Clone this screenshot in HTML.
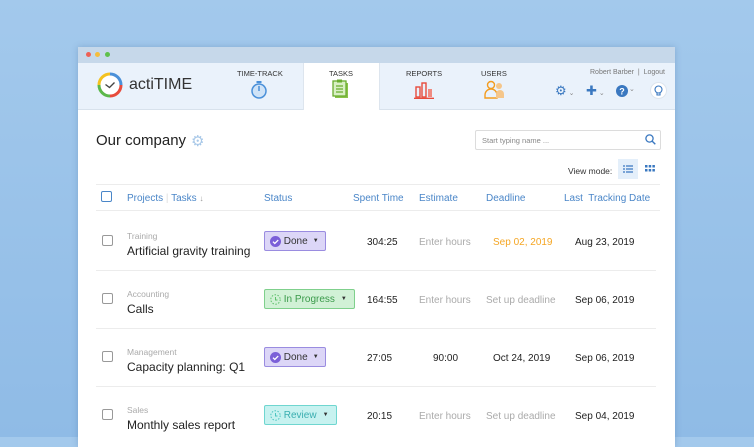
<!DOCTYPE html>
<html><head><meta charset="utf-8"><style>
*{margin:0;padding:0;box-sizing:border-box}
body{width:754px;height:437px;overflow:hidden;font-family:"Liberation Sans",sans-serif;background:linear-gradient(180deg,#a3c9ec 0%,#8fbbe6 100%);position:relative}
.a{position:absolute;white-space:nowrap}
.win{position:absolute;left:78px;top:47px;width:597px;height:400px;background:#fff;box-shadow:0 0 6px rgba(40,80,130,.25)}
.tb{position:absolute;left:0;top:0;width:597px;height:16px;background:#c6d8ea}
.dot{position:absolute;top:5px;width:5px;height:5px;border-radius:50%}
.hd{position:absolute;left:0;top:16px;width:597px;height:47px;background:#eaf2fb;border-bottom:1px solid #d8e2ec}
.nav{font-size:7.5px;color:#333}
.th{font-size:10px;color:#4a86c8}
.cb{position:absolute;width:11px;height:11px;border:1.3px solid #999;border-radius:2px;background:#fff}
.proj{font-size:8.5px;color:#aaa}
.task{font-size:12px;color:#222}
.num{font-size:10px;color:#222}
.gray{font-size:10px;color:#aaa}
.sep{position:absolute;left:96px;width:560px;height:1px;background:#ececec}
.badge{position:absolute;height:20px;border-radius:2px;font-size:10px;display:flex;align-items:center;padding-left:5px}
</style></head><body>
<div class="win">
<div class="tb"><div class="dot" style="left:8px;background:#ee6055"></div><div class="dot" style="left:17px;background:#f5bd3c"></div><div class="dot" style="left:27px;background:#5fc04a"></div></div>
<div class="hd">
<svg class="a" style="left:19px;top:9px" width="26" height="26" viewBox="0 0 26 26"><circle cx="13" cy="13" r="11" fill="#fff" stroke="#eee" stroke-width="1"/><path d="M13 2A11 11 0 0 1 24 13" stroke="#4a90d9" stroke-width="3" fill="none"/><path d="M24 13A11 11 0 0 1 13 24" stroke="#e84b3c" stroke-width="3" fill="none"/><path d="M13 24A11 11 0 0 1 2 13" stroke="#5bb84a" stroke-width="3" fill="none"/><path d="M2 13A11 11 0 0 1 13 2" stroke="#f4c21f" stroke-width="3" fill="none"/><path d="M8.5 12.5l4 3 5-5" stroke="#444" stroke-width="1.4" fill="none"/></svg>
<div class="a" style="left:51px;top:13px;font-size:16px;color:#333">actiTIME</div>
<div class="a nav" style="left:159px;top:6px">TIME-TRACK</div>
<svg class="a" style="left:172px;top:17px" width="18" height="20" viewBox="0 0 18 20"><circle cx="9" cy="11" r="7" fill="#cfe3f7" stroke="#4a90d9" stroke-width="1.5"/><rect x="6.5" y="1" width="5" height="2" fill="#4a90d9"/><path d="M9 6v5" stroke="#4a90d9" stroke-width="1.5"/></svg>
<div class="a" style="left:225px;top:0;width:77px;height:47px;background:#fff;border-left:1px solid #dde5ee;border-right:1px solid #dde5ee"></div>
<div class="a nav" style="left:251px;top:6px">TASKS</div>
<svg class="a" style="left:254px;top:16px" width="18" height="20" viewBox="0 0 18 20"><rect x="3" y="4" width="13" height="15" fill="#8bc34a"/><rect x="1" y="2" width="13" height="15" fill="#d9efc4" stroke="#6aac2f" stroke-width="1.3"/><rect x="5" y="0.5" width="5" height="3" fill="#6aac2f"/><path d="M4 7h7M4 10h7M4 13h7" stroke="#6aac2f" stroke-width="1.2"/></svg>
<div class="a nav" style="left:328px;top:6px">REPORTS</div>
<svg class="a" style="left:336px;top:18px" width="20" height="18" viewBox="0 0 20 18"><rect x="2" y="6" width="4" height="10" fill="none" stroke="#e84b3c" stroke-width="1.4"/><rect x="8" y="2" width="4" height="14" fill="none" stroke="#e84b3c" stroke-width="1.4"/><rect x="14" y="8" width="4" height="8" fill="#f08a80"/><path d="M0 17.3h20" stroke="#e84b3c" stroke-width="1.4"/></svg>
<div class="a nav" style="left:403px;top:6px">USERS</div>
<svg class="a" style="left:406px;top:17px" width="20" height="20" viewBox="0 0 20 20"><circle cx="7" cy="5" r="3.5" fill="none" stroke="#f39c1f" stroke-width="1.4"/><path d="M1 18v-3a5 5 0 0 1 12 0v3z" fill="none" stroke="#f39c1f" stroke-width="1.4"/><circle cx="15" cy="6" r="3" fill="#f5c68a"/><path d="M12 18v-4a4 4 0 0 1 8 0v4z" fill="#f5c68a"/></svg>
<div class="a" style="left:512px;top:6px;font-size:7px;color:#777">Robert Barber &nbsp;|&nbsp; Logout</div>
<div class="a" style="left:477px;top:20px;font-size:13px;color:#3a78c0">⚙<span style="font-size:7px;color:#888"> ⌄</span></div>
<div class="a" style="left:508px;top:20px;font-size:13px;color:#3a78c0">✚<span style="font-size:7px;color:#888"> ⌄</span></div>
<svg class="a" style="left:538px;top:22px" width="12" height="12"><circle cx="6" cy="6" r="6" fill="#3a78c0"/><text x="6" y="9.5" font-size="9" fill="#fff" text-anchor="middle" font-family="Liberation Sans" font-weight="bold">?</text></svg>
<div class="a" style="left:551px;top:22px;font-size:7px;color:#888">⌄</div>
<svg class="a" style="left:572px;top:19px" width="17" height="17"><circle cx="8.5" cy="8.5" r="8" fill="#fff" stroke="#dde5ee"/><circle cx="8.5" cy="7.5" r="3.5" fill="none" stroke="#3a78c0" stroke-width="1.1"/><path d="M7 11v2h3v-2" stroke="#3a78c0" fill="none" stroke-width="1.1"/></svg>
</div>
</div>
<div class="a" style="left:96px;top:132px;font-size:15px;color:#222">Our company</div>
<div class="a" style="left:191px;top:132px;font-size:15px;color:#a8c8e8">⚙</div>
<div class="a" style="left:475px;top:130px;width:186px;height:20px;border:1px solid #dcdcdc;border-radius:2px"></div>
<div class="a" style="left:482px;top:136px;font-size:7.5px;color:#888">Start typing name ...</div>
<svg class="a" style="left:645px;top:134px" width="11" height="11"><circle cx="4.5" cy="4.5" r="3.6" fill="none" stroke="#3a78c0" stroke-width="1.3"/><path d="M7 7l3.3 3.3" stroke="#3a78c0" stroke-width="1.4"/></svg>
<div class="a" style="left:568px;top:166px;font-size:8.5px;color:#333">View mode:</div>
<div class="a" style="left:618px;top:159px;width:20px;height:20px;background:#e4effa"></div>
<svg class="a" style="left:623px;top:165px" width="10" height="8"><path d="M0 1h2M3 1h7M0 4h2M3 4h7M0 7h2M3 7h7" stroke="#3a78c0" stroke-width="1.2"/></svg>
<svg class="a" style="left:645px;top:165px" width="10" height="8"><g fill="#3a78c0"><rect x="0" y="0" width="2.5" height="2.5"/><rect x="3.7" y="0" width="2.5" height="2.5"/><rect x="7.4" y="0" width="2.5" height="2.5"/><rect x="0" y="4" width="2.5" height="2.5"/><rect x="3.7" y="4" width="2.5" height="2.5"/><rect x="7.4" y="4" width="2.5" height="2.5"/></g></svg>
<div class="sep" style="top:184px;width:564px"></div>
<div class="cb" style="left:101px;top:191px;border-color:#4a86c8"></div>
<div class="a th" style="left:127px;top:193px">Projects <span style="color:#ddd">|</span> Tasks <span style="font-size:8px;color:#999">↓</span></div>
<div class="a th" style="left:264px;top:193px">Status</div>
<div class="a th" style="left:353px;top:193px">Spent Time</div>
<div class="a th" style="left:419px;top:193px">Estimate</div>
<div class="a th" style="left:486px;top:193px">Deadline</div>
<div class="a th" style="left:564px;top:193px">Last&nbsp; Tracking Date</div>
<div class="sep" style="top:210px;width:564px"></div>

<div class="cb" style="left:102px;top:235px"></div>
<div class="a proj" style="left:127px;top:231px">Training</div>
<div class="a task" style="left:127px;top:244px">Artificial gravity training</div>
<div class="badge" style="left:264px;top:231px;width:62px;background:#dcd6f7;border:1px solid #9a8ce0;color:#333"><svg width="11" height="11"><circle cx="5.5" cy="5.5" r="5.5" fill="#7b5fd8"/><path d="M3 5.7l1.8 1.8 3.4-3.4" stroke="#fff" stroke-width="1.3" fill="none"/></svg>&nbsp;Done <span style="font-size:6px;margin-left:5px">▼</span></div>
<div class="a num" style="left:367px;top:237px">304:25</div>
<div class="a gray" style="left:419px;top:237px">Enter hours</div>
<div class="a num" style="left:493px;top:237px;color:#f5a623">Sep 02, 2019</div>
<div class="a num" style="left:575px;top:237px">Aug 23, 2019</div>
<div class="sep" style="top:270px"></div>

<div class="cb" style="left:102px;top:293px"></div>
<div class="a proj" style="left:127px;top:289px">Accounting</div>
<div class="a task" style="left:127px;top:302px">Calls</div>
<div class="badge" style="left:264px;top:289px;width:91px;background:#d1f1d6;border:1px solid #7fd08c;color:#3a9a4a"><svg width="11" height="11"><circle cx="5.5" cy="5.5" r="4.7" fill="none" stroke="#5cbf6a" stroke-dasharray="1.5 1.5"/><path d="M5.5 3v3h2" stroke="#5cbf6a" fill="none"/></svg>&nbsp;In Progress <span style="font-size:6px;margin-left:6px;color:#333">▼</span></div>
<div class="a num" style="left:367px;top:295px">164:55</div>
<div class="a gray" style="left:419px;top:295px">Enter hours</div>
<div class="a gray" style="left:486px;top:295px">Set up deadline</div>
<div class="a num" style="left:575px;top:295px">Sep 06, 2019</div>
<div class="sep" style="top:328px"></div>

<div class="cb" style="left:102px;top:351px"></div>
<div class="a proj" style="left:127px;top:347px">Management</div>
<div class="a task" style="left:127px;top:360px">Capacity planning: Q1</div>
<div class="badge" style="left:264px;top:347px;width:62px;background:#dcd6f7;border:1px solid #9a8ce0;color:#333"><svg width="11" height="11"><circle cx="5.5" cy="5.5" r="5.5" fill="#7b5fd8"/><path d="M3 5.7l1.8 1.8 3.4-3.4" stroke="#fff" stroke-width="1.3" fill="none"/></svg>&nbsp;Done <span style="font-size:6px;margin-left:5px">▼</span></div>
<div class="a num" style="left:367px;top:353px">27:05</div>
<div class="a num" style="left:433px;top:353px">90:00</div>
<div class="a num" style="left:493px;top:353px">Oct 24, 2019</div>
<div class="a num" style="left:575px;top:353px">Sep 06, 2019</div>
<div class="sep" style="top:386px"></div>

<div class="cb" style="left:102px;top:409px"></div>
<div class="a proj" style="left:127px;top:405px">Sales</div>
<div class="a task" style="left:127px;top:418px">Monthly sales report</div>
<div class="badge" style="left:264px;top:405px;width:73px;background:#c7f2f0;border:1px solid #6fd6d0;color:#3aaeb0"><svg width="11" height="11"><circle cx="5.5" cy="5.5" r="4.7" fill="none" stroke="#4cc4c0" stroke-dasharray="1.5 1.5"/><path d="M5.5 3v3h2" stroke="#4cc4c0" fill="none"/></svg>&nbsp;Review <span style="font-size:6px;margin-left:6px;color:#333">▼</span></div>
<div class="a num" style="left:367px;top:411px">20:15</div>
<div class="a gray" style="left:419px;top:411px">Enter hours</div>
<div class="a gray" style="left:486px;top:411px">Set up deadline</div>
<div class="a num" style="left:575px;top:411px">Sep 04, 2019</div>
</body></html>
